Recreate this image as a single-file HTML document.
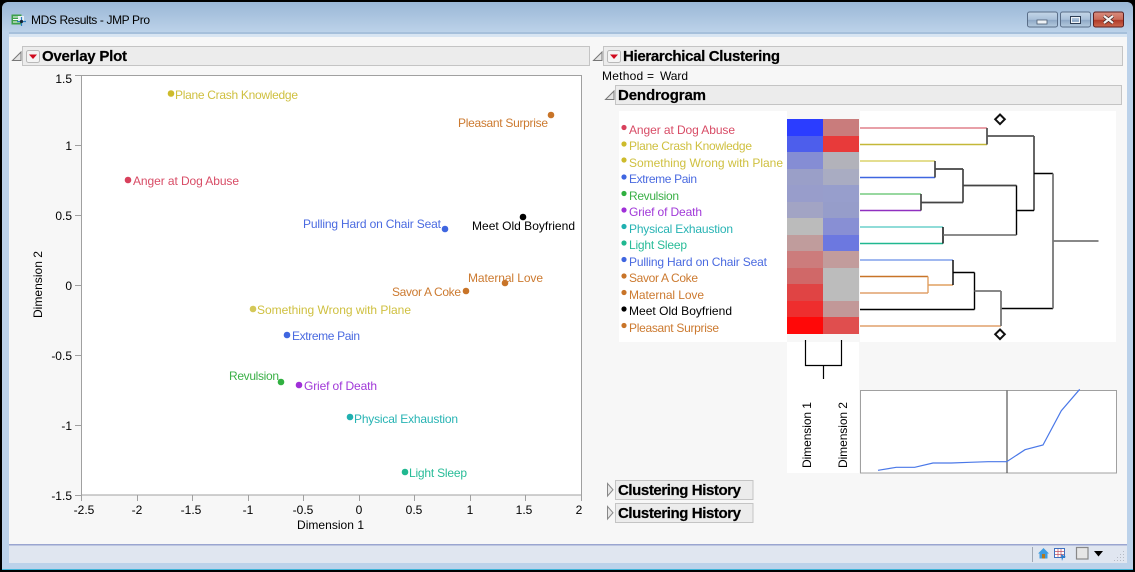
<!DOCTYPE html>
<html><head><meta charset="utf-8"><title>MDS Results - JMP Pro</title>
<style>
html,body{margin:0;padding:0;background:#000;width:1135px;height:572px;overflow:hidden}
svg{display:block}
text{font-family:"Liberation Sans",sans-serif;font-size:12px;fill:#000}
.h{font-weight:bold;font-size:15px}
</style></head><body>
<svg width="1135" height="572" viewBox="0 0 1135 572" xmlns="http://www.w3.org/2000/svg">
<defs>
<linearGradient id="tb" x1="0" y1="0" x2="0" y2="1"><stop offset="0" stop-color="#9ab7d6"/><stop offset="1" stop-color="#bcd2e9"/></linearGradient>
<linearGradient id="btn" x1="0" y1="0" x2="0" y2="1"><stop offset="0" stop-color="#c4d6e8"/><stop offset=".5" stop-color="#a9c0d9"/><stop offset=".55" stop-color="#8fa9c6"/><stop offset="1" stop-color="#b5cbe0"/></linearGradient>
<linearGradient id="cl" x1="0" y1="0" x2="0" y2="1"><stop offset="0" stop-color="#d98e80"/><stop offset=".5" stop-color="#c96a58"/><stop offset=".55" stop-color="#b03a28"/><stop offset="1" stop-color="#cc6a50"/></linearGradient>
</defs>
<rect width="1135" height="572" fill="#000"/>
<path d="M2 570V9Q2 2 9 2H1126Q1133 2 1133 9V570Z" fill="#bcd2ea"/>
<path d="M2 32V9Q2 2 9 2H1126Q1133 2 1133 9V32Z" fill="url(#tb)"/>
<rect x="2" y="569" width="1131" height="1" fill="#3fb4d8"/>
<rect x="9" y="32" width="1118" height="2" fill="#a6c0db"/>
<rect x="9" y="34" width="1118" height="3" fill="#d8e5f2"/>
<rect x="9" y="37" width="1118" height="507" fill="#f7f7f7"/>
<rect x="9" y="544" width="1118" height="1.5" fill="#9aa5d0"/>
<rect x="9" y="545.5" width="1118" height="17.5" fill="#e0e6f0"/>

<!-- title bar -->
<g>
<rect x="11.5" y="14.5" width="10" height="10" fill="#3ea04a"/>
<path d="M13 17h7M13 19.500h7M13 22h7" stroke="#fff" stroke-width="1"/>
<rect x="18" y="16" width="6" height="6" fill="#e8f0f4"/>
<path d="M21.500 17v9M17 21.500h9" stroke="#2a7fc0" stroke-width="1.200"/>
<circle cx="21.500" cy="21.500" r="1.600" fill="#123"/>
</g>
<text x="31" y="24" textLength="119">MDS Results - JMP Pro</text>
<rect x="1027.500" y="12" width="30" height="15" rx="2" fill="url(#btn)" stroke="#5a6e88"/>
<rect x="1037" y="20" width="10" height="4" fill="#eef2f6" stroke="#4a5a70" stroke-width=".8"/>
<rect x="1060.500" y="12" width="30" height="15" rx="2" fill="url(#btn)" stroke="#5a6e88"/>
<rect x="1070.500" y="16.500" width="10" height="7" fill="none" stroke="#2e3e54" stroke-width="1"/>
<rect x="1071.500" y="17.500" width="8" height="5" fill="none" stroke="#eef2f6" stroke-width="1"/>
<rect x="1093.500" y="12" width="30" height="15" rx="2" fill="url(#cl)" stroke="#5e2020"/>
<path d="M1104 16l9 7M1113 16l-9 7" stroke="#3a2020" stroke-width="3.600"/>
<path d="M1104 16l9 7M1113 16l-9 7" stroke="#f4f4f4" stroke-width="2.200"/>

<!-- Overlay plot header -->
<path d="M12.500 60.500H21V52Z" fill="#e4e4e4" stroke="#777"/>
<rect x="22.500" y="46.500" width="567" height="19" fill="#ececec" stroke="#c4c4c4"/>
<rect x="26.500" y="50.500" width="13" height="12" rx="2" fill="#f4f4f4" stroke="#b8b8b8"/>
<path d="M29 54.500h8l-4 4.500Z" fill="#d00a1e"/>
<text class="h" x="42" y="61" textLength="85" stroke="#000" stroke-width=".2">Overlay Plot</text>

<!-- Plot -->
<rect x="81.500" y="75.500" width="500" height="419.500" fill="#fff" stroke="#a0a0a0"/>
<g stroke="#a0a0a0" fill="none">
<path d="M75 75.500h6M75 145.500h6M75 215.500h6M75 285.500h6M75 355.500h6M75 425.500h6M75 495.500h6"/>
<path d="M81.500 495v6M137.500 495v6M192.500 495v6M248.500 495v6M303.500 495v6M359.500 495v6M414.500 495v6M470.500 495v6M525.500 495v6M581.500 495v6"/>
</g>
<g text-anchor="end">
<text x="72" y="83">1.5</text><text x="72" y="150">1</text><text x="72" y="220">0.5</text><text x="72" y="290">0</text><text x="72" y="360">-0.5</text><text x="72" y="430">-1</text><text x="72" y="500">-1.5</text>
</g>
<g text-anchor="middle">
<text x="84" y="514">-2.5</text><text x="137" y="514">-2</text><text x="191" y="514">-1.5</text><text x="248" y="514">-1</text><text x="303" y="514">-0.5</text><text x="359" y="514">0</text><text x="414" y="514">0.5</text><text x="470" y="514">1</text><text x="524" y="514">1.5</text><text x="579" y="514">2</text>
</g>
<text x="297" y="529" textLength="67">Dimension 1</text>
<text transform="translate(42 318) rotate(-90)" textLength="67">Dimension 2</text>

<g>
<circle cx="171" cy="93.500" r="3.300" fill="#cdbb2c"/><text x="175" y="99" textLength="123" style="fill:#cfc040">Plane Crash Knowledge</text>
<circle cx="551" cy="115" r="3.300" fill="#c87428"/><text x="458" y="127" textLength="90" style="fill:#cc7a30">Pleasant Surprise</text>
<circle cx="128" cy="180" r="3.300" fill="#d8405c"/><text x="133" y="185" textLength="106" style="fill:#d84c66">Anger at Dog Abuse</text>
<circle cx="445" cy="229" r="3.300" fill="#3f66e0"/><text x="303" y="228" textLength="138" style="fill:#4a6ae0">Pulling Hard on Chair Seat</text>
<circle cx="523" cy="217" r="3.300" fill="#000"/><text x="472" y="230" textLength="103">Meet Old Boyfriend</text>
<circle cx="505" cy="283" r="3.300" fill="#c87428"/><text x="468" y="282" textLength="75" style="fill:#cc7a30">Maternal Love</text>
<circle cx="466" cy="291" r="3.300" fill="#c87428"/><text x="392" y="296" textLength="69" style="fill:#cc7a30">Savor A Coke</text>
<circle cx="253" cy="309" r="3.300" fill="#d4c858"/><text x="257" y="314" textLength="154" style="fill:#cfc040">Something Wrong with Plane</text>
<circle cx="287" cy="335" r="3.300" fill="#3f66e0"/><text x="292" y="340" textLength="68" style="fill:#4a6ae0">Extreme Pain</text>
<circle cx="281" cy="382" r="3.300" fill="#30b040"/><text x="229" y="380" textLength="50" style="fill:#3cb048">Revulsion</text>
<circle cx="299" cy="385" r="3.300" fill="#a030d8"/><text x="304" y="390" textLength="73" style="fill:#a038d8">Grief of Death</text>
<circle cx="350" cy="417" r="3.300" fill="#20b0b0"/><text x="354" y="423" textLength="104" style="fill:#28b4b4">Physical Exhaustion</text>
<circle cx="405" cy="472" r="3.300" fill="#20b890"/><text x="409" y="477" textLength="58" style="fill:#28bc98">Light Sleep</text>
</g>

<!-- Hierarchical header -->
<path d="M593.500 60.500H602V52Z" fill="#e4e4e4" stroke="#777"/>
<rect x="603.500" y="46.500" width="519" height="19" fill="#ececec" stroke="#c4c4c4"/>
<rect x="607.500" y="50.500" width="13" height="12" rx="2" fill="#f4f4f4" stroke="#b8b8b8"/>
<path d="M610 54.500h8l-4 4.500Z" fill="#d00a1e"/>
<text class="h" x="623" y="61" textLength="157" stroke="#000" stroke-width=".2">Hierarchical Clustering</text>
<text x="602" y="80" textLength="52">Method =</text>
<text x="660" y="80" textLength="28">Ward</text>
<path d="M605.500 99.500H614V91Z" fill="#e4e4e4" stroke="#777"/>
<rect x="615.500" y="85.500" width="506" height="19" fill="#ececec" stroke="#c4c4c4"/>
<text class="h" x="618" y="100" textLength="88" stroke="#000" stroke-width=".2">Dendrogram</text>

<!-- panels -->
<rect x="619" y="111" width="168" height="231" fill="#fff"/>
<rect x="860" y="111" width="256" height="231" fill="#fff"/>
<rect x="787" y="342" width="72" height="131" fill="#fff"/>

<!-- heatmap -->
<g>
<rect x="787" y="119" width="36" height="17" fill="#2b3dff"/><rect x="823" y="119" width="36" height="17" fill="#c97c7c"/>
<rect x="787" y="136" width="36" height="16" fill="#4d5eec"/><rect x="823" y="136" width="36" height="16" fill="#e83a3a"/>
<rect x="787" y="152" width="36" height="17" fill="#858dd4"/><rect x="823" y="152" width="36" height="17" fill="#b2b2ba"/>
<rect x="787" y="169" width="36" height="16" fill="#9a9fc8"/><rect x="823" y="169" width="36" height="16" fill="#a9acc2"/>
<rect x="787" y="185" width="36" height="17" fill="#989dcb"/><rect x="823" y="185" width="36" height="17" fill="#979ecc"/>
<rect x="787" y="202" width="36" height="16" fill="#a2a4c4"/><rect x="823" y="202" width="36" height="16" fill="#969dca"/>
<rect x="787" y="218" width="36" height="17" fill="#bbbbbb"/><rect x="823" y="218" width="36" height="17" fill="#888fd4"/>
<rect x="787" y="235" width="36" height="16" fill="#c09c9c"/><rect x="823" y="235" width="36" height="16" fill="#6c78e0"/>
<rect x="787" y="251" width="36" height="17" fill="#cc7c7c"/><rect x="823" y="251" width="36" height="17" fill="#c29c9c"/>
<rect x="787" y="268" width="36" height="16" fill="#d06868"/><rect x="823" y="268" width="36" height="16" fill="#bcbcbc"/>
<rect x="787" y="284" width="36" height="17" fill="#e04444"/><rect x="823" y="284" width="36" height="17" fill="#bcbcbc"/>
<rect x="787" y="301" width="36" height="16" fill="#ee2e2e"/><rect x="823" y="301" width="36" height="16" fill="#c29898"/>
<rect x="787" y="317" width="36" height="17" fill="#ff0808"/><rect x="823" y="317" width="36" height="17" fill="#e04e4e"/>
</g>

<!-- row labels -->
<g>
<circle cx="624" cy="127.500" r="2.600" fill="#d8405c"/><text x="629" y="134" textLength="106" style="fill:#d84c66">Anger at Dog Abuse</text>
<circle cx="624" cy="144" r="2.600" fill="#cdbb2c"/><text x="629" y="150" textLength="123" style="fill:#cfc040">Plane Crash Knowledge</text>
<circle cx="624" cy="160" r="2.600" fill="#cdbb2c"/><text x="629" y="167" textLength="154" style="fill:#cfc040">Something Wrong with Plane</text>
<circle cx="624" cy="177" r="2.600" fill="#3f66e0"/><text x="629" y="183" textLength="68" style="fill:#4a6ae0">Extreme Pain</text>
<circle cx="624" cy="193.500" r="2.600" fill="#30b040"/><text x="629" y="200" textLength="50" style="fill:#3cb048">Revulsion</text>
<circle cx="624" cy="210" r="2.600" fill="#a030d8"/><text x="629" y="216" textLength="73" style="fill:#a038d8">Grief of Death</text>
<circle cx="624" cy="226.500" r="2.600" fill="#20b0b0"/><text x="629" y="233" textLength="104" style="fill:#28b4b4">Physical Exhaustion</text>
<circle cx="624" cy="243" r="2.600" fill="#20b890"/><text x="629" y="249" textLength="58" style="fill:#28bc98">Light Sleep</text>
<circle cx="624" cy="259.500" r="2.600" fill="#3f66e0"/><text x="629" y="266" textLength="138" style="fill:#4a6ae0">Pulling Hard on Chair Seat</text>
<circle cx="624" cy="276" r="2.600" fill="#c87428"/><text x="629" y="282" textLength="69" style="fill:#cc7a30">Savor A Coke</text>
<circle cx="624" cy="292.500" r="2.600" fill="#c87428"/><text x="629" y="299" textLength="75" style="fill:#cc7a30">Maternal Love</text>
<circle cx="624" cy="309" r="2.600" fill="#000"/><text x="629" y="315" textLength="103">Meet Old Boyfriend</text>
<circle cx="624" cy="325.500" r="2.600" fill="#c87428"/><text x="629" y="332" textLength="90" style="fill:#cc7a30">Pleasant Surprise</text>
</g>

<!-- dendrogram -->
<g fill="none">
<path d="M860 128H987" stroke="#e8a0a8" stroke-width="2"/>
<path d="M860 144.500H987" stroke="#c4b838" stroke-width="1.400"/>
<path d="M860 161H935" stroke="#e4de90" stroke-width="2"/>
<path d="M860 177.500H935" stroke="#3f66e0" stroke-width="1.400"/>
<path d="M860 194H921" stroke="#98d8a0" stroke-width="2"/>
<path d="M860 210.500H921" stroke="#9030c0" stroke-width="1.400"/>
<path d="M860 227H943" stroke="#90dcd8" stroke-width="2"/>
<path d="M860 243.500H943" stroke="#20b890" stroke-width="1.400"/>
<path d="M860 260H953" stroke="#a0b8f0" stroke-width="2"/>
<path d="M860 276.500H928" stroke="#c87428" stroke-width="1.400"/>
<path d="M860 293H928" stroke="#e8b890" stroke-width="2"/>
<path d="M860 309.500H974.500" stroke="#000" stroke-width="1.400"/>
<path d="M860 326H1001" stroke="#e8b890" stroke-width="2"/>
<path d="M928 276.500V293M928 285H953" stroke="#e0a060" stroke-width="1.400"/>
<path d="M987 128V144.500M987 136H1034M1034 136V210.500" stroke="#555" stroke-width="1.800"/>
<path d="M935 161V177.500M935 169H963M921 194V210.500M921 202.500H963M963 169V202.500M963 185.500H1016.500" stroke="#444" stroke-width="1.700"/>
<path d="M1016.500 185.500V235M1016.500 210.500H1034M943 227V243.500" stroke="#000" stroke-width="1.400"/>
<path d="M943 235H1016.500" stroke="#666" stroke-width="1.600"/>
<path d="M1034 173.500H1053M953 260V285M953 272.500H974.500M974.500 272.500V309.500M1001 308.500H1053" stroke="#000" stroke-width="1.400"/>
<path d="M1053 173.500V308.500M1053 241H1098.500" stroke="#777" stroke-width="1.800"/>
<path d="M974.500 291H1001M1001 291V326" stroke="#777" stroke-width="1.800"/>
<path d="M1000 114.500l4.800 4.800-4.800 4.800-4.800-4.800Z" stroke="#111" stroke-width="2" fill="#fff"/>
<path d="M1000 329.500l4.800 4.800-4.800 4.800-4.800-4.800Z" stroke="#111" stroke-width="2" fill="#fff"/>
<path d="M805.500 340V365.500H841.500V340M823.500 365.500V379" stroke="#000" stroke-width="1.200"/>
</g>
<text transform="translate(811 468) rotate(-90)" textLength="66">Dimension 1</text>
<text transform="translate(847 468) rotate(-90)" textLength="66">Dimension 2</text>

<!-- scree -->
<rect x="860.500" y="390.500" width="256" height="82.500" fill="#fff" stroke="#a0a0a0"/>
<path d="M1007 390.500V473" stroke="#555" stroke-width="1.200"/>
<polyline points="878,470.300 896.300,467.300 914.700,467.300 933,463 951.300,463 969.700,462.300 988,461.700 1006.700,461.700 1025,449.700 1043,445 1061.300,410.700 1079.700,389.300" fill="none" stroke="#4a78e8" stroke-width="1.200"/>

<!-- clustering history -->
<path d="M607.500 483.500V496L613 489.700Z" fill="#e8e8e8" stroke="#888"/>
<rect x="615.500" y="480.500" width="137.500" height="19" fill="#ececec" stroke="#c4c4c4"/>
<text class="h" x="618" y="495" textLength="123" stroke="#000" stroke-width=".2">Clustering History</text>
<path d="M607.500 506.500V519L613 512.700Z" fill="#e8e8e8" stroke="#888"/>
<rect x="615.500" y="503.500" width="137.500" height="19" fill="#ececec" stroke="#c4c4c4"/>
<text class="h" x="618" y="518" textLength="123" stroke="#000" stroke-width=".2">Clustering History</text>

<!-- status bar -->
<path d="M1032.500 547V562" stroke="#a0a8b4"/>
<path d="M1038 553.500l5.500-5.500 5.500 5.500h-1.500v5h-8v-5Z" fill="#3f9ce0"/>
<rect x="1042" y="554" width="3" height="4.500" fill="#b07820"/>
<rect x="1054.500" y="548.500" width="10" height="9" fill="#fff" stroke="#3f70c0"/>
<path d="M1055 551.500h9M1055 554.500h9M1058 549v8M1061 549v8" stroke="#c05060" stroke-width=".7"/>
<path d="M1061 554l5 3-3 1-1 3Z" fill="#2a80d0"/>
<rect x="1076.500" y="547.500" width="11.500" height="11.500" fill="#e6e6e6" stroke="#888" stroke-width="1.200"/>
<path d="M1094 551h9l-4.500 5.500Z" fill="#000"/>
<g fill="#b4bac4"><rect x="1123" y="551" width="1" height="1"/><rect x="1120" y="554" width="1" height="1"/><rect x="1123" y="554" width="1" height="1"/><rect x="1117" y="557" width="1" height="1"/><rect x="1120" y="557" width="1" height="1"/><rect x="1123" y="557" width="1" height="1"/><rect x="1114" y="560" width="1" height="1"/><rect x="1117" y="560" width="1" height="1"/><rect x="1120" y="560" width="1" height="1"/><rect x="1123" y="560" width="1" height="1"/></g>
</svg>
</body></html>
